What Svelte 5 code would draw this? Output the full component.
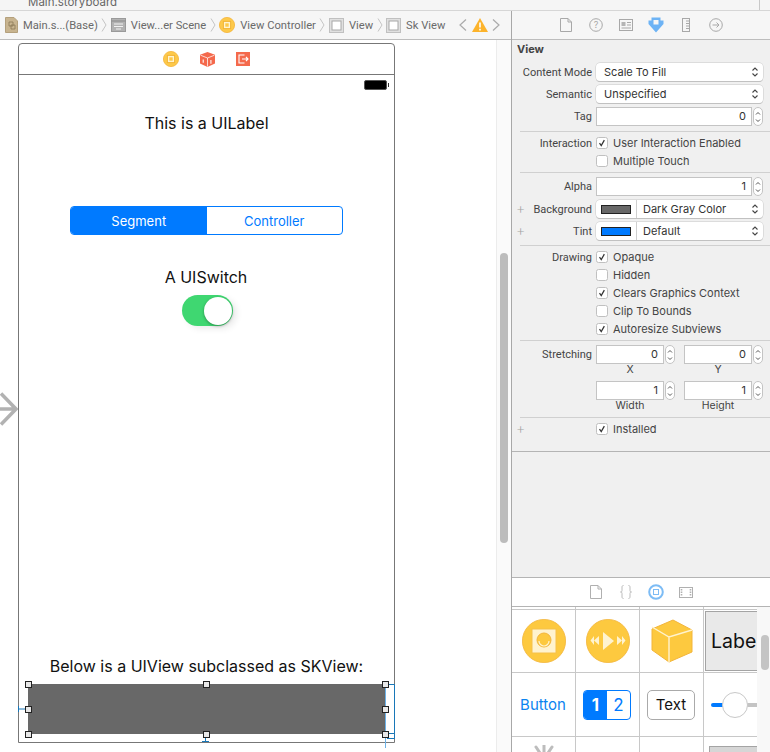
<script>
  const crumbs = [
    { name: "Main.s...(Base)", icon: "file" },
    { name: "View...er Scene", icon: "scene" },
    { name: "View Controller", icon: "vc" },
    { name: "View", icon: "view" },
    { name: "Sk View", icon: "view" },
  ];

  const interaction = [
    { label: "User Interaction Enabled", on: true },
    { label: "Multiple Touch", on: false },
  ];

  const drawing = [
    { label: "Opaque", on: true },
    { label: "Hidden", on: false },
    { label: "Clears Graphics Context", on: true },
    { label: "Clip To Bounds", on: false },
    { label: "Autoresize Subviews", on: true },
  ];

  // handles around the selected view, in percent of its box
  const handles = [
    [0, 0], [50, 0], [100, 0],
    [0, 50], [100, 50],
    [0, 100], [50, 100], [100, 100],
  ];
</script>

{#snippet updown()}
  <svg class="updown" viewBox="0 0 8 12" width="8" height="12">
    <path d="M1.5 4.5 L4 2 L6.5 4.5 M1.5 7.5 L4 10 L6.5 7.5" fill="none" stroke="#444" stroke-width="1.1" />
  </svg>
{/snippet}

{#snippet stepper()}
  <span class="stepper">
    <svg viewBox="0 0 8 16" width="8" height="16">
      <path d="M2 5.5 L4 3.5 L6 5.5 M2 10.5 L4 12.5 L6 10.5" fill="none" stroke="#555" stroke-width="1" />
    </svg>
  </span>
{/snippet}

{#snippet check(on)}
  <span class="box">
    {#if on}
      <svg viewBox="0 0 12 12" width="12" height="12">
        <path d="M3 6.2 L5.1 9 L8.8 2.6" fill="none" stroke="#333" stroke-width="1.5" />
      </svg>
    {/if}
  </span>
{/snippet}

{#snippet vcIcon(size)}
  <svg viewBox="0 0 16 16" width={size} height={size}>
    <circle cx="8" cy="8" r="7.6" fill="#fdc94a" stroke="#f5b437" stroke-width="0.8" />
    <rect x="4.4" y="4.4" width="7.2" height="7.2" fill="#fff3cf" stroke="#f2b437" />
    <rect x="6.3" y="6.3" width="3.4" height="3.4" fill="#fdc94a" />
  </svg>
{/snippet}

<div class="app">
  <div class="tabstrip">
    <span class="tabname">Main.storyboard</span>
    <span class="tabtick"></span>
  </div>

  <div class="main">
    <div class="editor">
      <nav class="crumbs">
        {#each crumbs as c, i}
          {#if i > 0}
            <svg class="sep" viewBox="0 0 6 14" width="6" height="14">
              <path d="M1 0.5 L5 7 L1 13.5" fill="none" stroke="#c4c4c4" />
            </svg>
          {/if}
          <span class="crumb">
            {#if c.icon === "file"}
              <svg viewBox="0 0 13 16" width="13" height="16">
                <path d="M0.5 0.5 H9 L12.5 4 V15.5 H0.5 Z" fill="#c8b48f" stroke="#b4a07c" />
                <path d="M4 5 H8 V9 H4 Z M6 8 H10 V12 H6 Z" fill="none" stroke="#8c7a55" stroke-width="0.8" />
              </svg>
            {:else if c.icon === "scene"}
              <svg viewBox="0 0 15 14" width="15" height="14">
                <rect x="0.5" y="0.5" width="14" height="13" fill="#b2b2b2" stroke="#9a9a9a" />
                <path d="M0.5 3 H14.5" stroke="#8a8a8a" />
                <path d="M3 6 H12 M3 8.5 H12 M5 11 H10" stroke="#f2f2f2" />
              </svg>
            {:else if c.icon === "vc"}
              {@render vcIcon(16)}
            {:else}
              <svg viewBox="0 0 15 15" width="15" height="15">
                <rect x="0.5" y="0.5" width="14" height="14" fill="#e0e0e0" stroke="#c0c0c0" />
                <rect x="3" y="3" width="9" height="9" fill="#fff" stroke="#a8a8a8" />
              </svg>
            {/if}
            {c.name}
          </span>
        {/each}
        <span class="crumbnav">
          <svg viewBox="0 0 8 12" width="8" height="12"><path d="M7 0.5 L1 6 L7 11.5" fill="none" stroke="#aaa" stroke-width="1.2" /></svg>
          <svg viewBox="0 0 16 14" width="16" height="14">
            <path d="M8 0 L16 14 H0 Z" fill="#fcb32b" />
            <path d="M8 4.5 V9.5 M8 10.8 V12.4" stroke="#fff" stroke-width="1.6" />
          </svg>
          <svg viewBox="0 0 8 12" width="8" height="12"><path d="M1 0.5 L7 6 L1 11.5" fill="none" stroke="#aaa" stroke-width="1.2" /></svg>
        </span>
      </nav>

      <div class="canvas">
        <svg class="entry" viewBox="0 0 18 34" width="18" height="34">
          <path d="M-2 17 H15 M1 1.5 L16 17 L1 32.5" fill="none" stroke="#b2b2b2" stroke-width="3.5" />
        </svg>

        <section class="device">
          <header class="devicebar">
            {@render vcIcon(16)}
            <svg viewBox="0 0 14 14" width="15" height="15">
              <path d="M7 0 L14 2.6 V10.8 L7 14 L0 10.8 V2.6 Z" fill="#f4694c" />
              <path d="M0.5 3 L7 5.6 L13.5 3 M7 5.6 V13.6" fill="none" stroke="#fff" stroke-width="0.7" />
              <path d="M3 7 V10 M10.2 7.4 V11" stroke="#fff" stroke-width="1" />
            </svg>
            <svg viewBox="0 0 14 14" width="14" height="14">
              <rect width="14" height="14" fill="#f4694c" />
              <path d="M8.5 3 H3 V11 H8.5 M6 7 H12 M10 5 L12 7 L10 9" fill="none" stroke="#fff" stroke-width="1.1" />
            </svg>
          </header>

          <div class="screen">
            <div class="status">
              <span class="battery"></span>
            </div>
            <div class="uilabel first">This is a UILabel</div>
            <div class="segment">
              <span class="seg on">Segment</span>
              <span class="seg">Controller</span>
            </div>
            <div class="uilabel second">A UISwitch</div>
            <div class="switch"><span class="knob"></span></div>
            <div class="uilabel third">Below is a UIView subclassed as SKView:</div>
            <div class="skview">
              {#each handles as [hx, hy]}
                <span class="handle" style="left: {hx}%; top: {hy}%"></span>
              {/each}
              <svg class="guides" viewBox="0 0 420 70" width="420" height="70">
                <path d="M-9.5 22 V28 M-9.5 25 H-2" stroke="#1877b8" fill="none" />
                <path d="M177.5 50 V58 M174 57.5 H181" stroke="#1877b8" fill="none" />
                <path d="M357.5 -2 V64" stroke="#6cb2e8" fill="none" />
                <path d="M359 0.5 H366.5 V49.5 M359 49.5 H366.5 M359 54.5 H366.5 V50" stroke="#1877b8" fill="none" />
              </svg>
            </div>
          </div>
        </section>

        <div class="vscroll"><span class="vthumb"></span></div>
      </div>
    </div>

    <aside class="inspector">
      <div class="tabs">
        <svg viewBox="0 0 12 14" width="12" height="14"><path d="M0.5 0.5 H8 L11.5 4 V13.5 H0.5 Z M8 0.5 V4 H11.5" fill="none" stroke="#a8a8a8" /></svg>
        <svg viewBox="0 0 14 14" width="14" height="14">
          <circle cx="7" cy="7" r="6.3" fill="none" stroke="#a8a8a8" />
          <text x="7" y="10" class="helpmark">?</text>
        </svg>
        <svg viewBox="0 0 14 12" width="14" height="12">
          <rect x="0.5" y="0.5" width="13" height="11" fill="none" stroke="#a8a8a8" />
          <rect x="2.5" y="3" width="4" height="4" fill="#b4b4b4" />
          <path d="M8 3.5 H12 M8 6 H12 M2.5 9 H12" stroke="#a8a8a8" />
        </svg>
        <svg viewBox="0 0 16 16" width="16" height="16">
          <path d="M3.5 0.5 H12.5 V3.5 H15.5 V7 L8 15.5 L0.5 7 V3.5 H3.5 Z" fill="#6db3f5" />
          <rect x="5.5" y="3" width="5" height="4.5" fill="#f6f6f6" />
        </svg>
        <svg viewBox="0 0 8 14" width="8" height="14">
          <rect x="0.5" y="0.5" width="7" height="13" fill="none" stroke="#a8a8a8" />
          <path d="M4 3 H7 M4 5.5 H7 M4 8 H7 M4 10.5 H7" stroke="#a8a8a8" />
        </svg>
        <svg viewBox="0 0 14 14" width="14" height="14">
          <circle cx="7" cy="7" r="6.3" fill="none" stroke="#a8a8a8" />
          <path d="M3.5 7 H10 M7.5 4.5 L10 7 L7.5 9.5" fill="none" stroke="#a8a8a8" />
        </svg>
      </div>

      <div class="attrs">
        <h3>View</h3>

        <div class="sect s1">
          <div class="row h18"><span class="lab">Content Mode</span><div class="select">Scale To Fill{@render updown()}</div></div>
          <div class="row h18"><span class="lab">Semantic</span><div class="select">Unspecified{@render updown()}</div></div>
          <div class="row h19"><span class="lab">Tag</span><div class="numline"><span class="input">0</span>{@render stepper()}</div></div>
        </div>
        <hr />

        <div class="sect s2">
          {#each interaction as item, i}
            <div class="row h18">
              <span class="lab">{i === 0 ? "Interaction" : ""}</span>
              <label class="chk">{@render check(item.on)}{item.label}</label>
            </div>
          {/each}
        </div>
        <hr />

        <div class="sect s3">
          <div class="row h19"><span class="lab">Alpha</span><div class="numline"><span class="input">1</span>{@render stepper()}</div></div>
          <div class="row h18">
            <span class="lab"><span class="plus">+</span>Background</span>
            <div class="select colored"><span class="well"><i class="gray"></i></span>Dark Gray Color{@render updown()}</div>
          </div>
          <div class="row h18">
            <span class="lab"><span class="plus">+</span>Tint</span>
            <div class="select colored"><span class="well"><i class="blue"></i></span>Default{@render updown()}</div>
          </div>
        </div>
        <hr />

        <div class="sect s4">
          {#each drawing as item, i}
            <div class="row h18">
              <span class="lab">{i === 0 ? "Drawing" : ""}</span>
              <label class="chk">{@render check(item.on)}{item.label}</label>
            </div>
          {/each}
        </div>
        <hr />

        <div class="sect s5">
          <div class="row h18">
            <span class="lab">Stretching</span>
            <div class="pairs">
              <div class="pair"><span class="input">0</span>{@render stepper()}</div>
              <div class="pair"><span class="input">0</span>{@render stepper()}</div>
            </div>
          </div>
          <div class="row h14">
            <span class="lab"></span>
            <div class="pairs caps"><span>X</span><span>Y</span></div>
          </div>
          <div class="row h18 gap4">
            <span class="lab"></span>
            <div class="pairs">
              <div class="pair"><span class="input">1</span>{@render stepper()}</div>
              <div class="pair"><span class="input">1</span>{@render stepper()}</div>
            </div>
          </div>
          <div class="row h14">
            <span class="lab"></span>
            <div class="pairs caps"><span>Width</span><span>Height</span></div>
          </div>
        </div>
        <hr />

        <div class="sect s6">
          <div class="row h18">
            <span class="lab"><span class="plus">+</span></span>
            <label class="chk">{@render check(true)}Installed</label>
          </div>
        </div>
      </div>

      <div class="filler"></div>

      <div class="libtabs">
        <svg viewBox="0 0 12 14" width="12" height="14"><path d="M0.5 0.5 H8 L11.5 4 V13.5 H0.5 Z M8 0.5 V4 H11.5" fill="none" stroke="#b0b0b0" /></svg>
        <svg viewBox="0 0 12 14" width="12" height="14">
          <path d="M3.5 0.5 C2 0.5 2 1.5 2 3 V5.5 C2 6.5 1.5 7 0.5 7 C1.5 7 2 7.5 2 8.5 V11 C2 12.5 2 13.5 3.5 13.5 M8.5 0.5 C10 0.5 10 1.5 10 3 V5.5 C10 6.5 10.5 7 11.5 7 C10.5 7 10 7.5 10 8.5 V11 C10 12.5 10 13.5 8.5 13.5" fill="none" stroke="#b4b4b4" stroke-width="0.9" />
        </svg>
        <svg viewBox="0 0 16 16" width="16" height="16">
          <circle cx="8" cy="8" r="6.8" fill="none" stroke="#7dbcf5" stroke-width="2" />
          <rect x="5.5" y="5.5" width="5" height="5" fill="none" stroke="#7dbcf5" />
        </svg>
        <svg viewBox="0 0 14 11" width="14" height="11">
          <rect x="0.5" y="0.5" width="13" height="10" fill="none" stroke="#b0b0b0" />
          <path d="M2.5 2 V9.5 M11.5 2 V9.5" stroke="#b0b0b0" stroke-dasharray="1.5 1" stroke-width="1.6" />
        </svg>
      </div>

      <div class="library">
        <div class="grid">
          <div class="cell"></div><div class="cell"></div><div class="cell"></div><div class="cell"></div>

          <div class="cell">
            <svg viewBox="0 0 44 44" width="44" height="44">
              <circle cx="22" cy="22" r="21.6" fill="#fdc93f" stroke="#f3b53a" stroke-width="0.8" />
              <rect x="10" y="10" width="24" height="24" fill="#fff3cf" stroke="#f6c14a" />
              <circle cx="22" cy="21" r="7" fill="#fdc93f" stroke="#f3b53a" />
              <path d="M17 22 a5 5 0 0 0 10 0" fill="none" stroke="#fff3cf" stroke-width="1.2" />
            </svg>
          </div>
          <div class="cell">
            <svg viewBox="0 0 44 44" width="44" height="44">
              <circle cx="22" cy="22" r="21.6" fill="#fdc93f" stroke="#f3b53a" stroke-width="0.8" />
              <path d="M17 13 L28 22 L17 31 Z" fill="#fff3cf" />
              <path d="M13 17 L8 21.5 L13 26 Z M8 17 L4.5 21.5 L8 26 Z M31 17 L36 21.5 L31 26 Z M36 17 L39.5 21.5 L36 26 Z" fill="#fff3cf" />
            </svg>
          </div>
          <div class="cell">
            <svg viewBox="0 0 42 44" width="42" height="44">
              <path d="M1 10 L22 1 L41 11 V33 L18 43 L1 31 Z" fill="#fdc93f" stroke="#f3b53a" />
              <path d="M1 8 L18 18 L41 11 M18 18 V43" fill="none" stroke="#fff3cf" stroke-width="1.4" />
            </svg>
          </div>
          <div class="cell labelcell"><span class="labelbox">Label</span></div>

          <div class="cell"><span class="btnword">Button</span></div>
          <div class="cell">
            <div class="minisegment"><span class="mini on">1</span><span class="mini">2</span></div>
          </div>
          <div class="cell"><span class="textfield">Text</span></div>
          <div class="cell slidercell">
            <div class="slider"><span class="fill"></span><span class="thumb"></span><span class="rest"></span></div>
          </div>

          <div class="cell">
            <svg class="spinner" viewBox="0 0 26 8" width="26" height="8">
              <path d="M13 0 V8 M5 2 L9 8 M21 2 L17 8" stroke="#bdbdbd" stroke-width="3" stroke-linecap="round" />
            </svg>
          </div>
          <div class="cell"></div>
          <div class="cell"></div>
          <div class="cell"><span class="imgbox"></span></div>
        </div>
        <div class="libscroll"><span class="libthumb"></span></div>
      </div>
    </aside>
  </div>
</div>

<style>
  :global(body) {
    margin: 0;
    font-family: Inter, "Liberation Sans", sans-serif;
  }

  .app {
    width: 770px;
    height: 752px;
    overflow: hidden;
    display: flex;
    flex-direction: column;
    background: #fff;
  }

  .tabstrip {
    height: 10px;
    flex: none;
    overflow: hidden;
    background: #f5f5f5;
    border-bottom: 1px solid #d6d6d6;
    display: flex;
    padding-left: 28px;
    font-size: 11.5px;
    line-height: 5px;
    color: #666;
  }

  .tabtick {
    width: 1px;
    background: #c8c8c8;
    margin-left: auto;
    margin-right: 10px;
  }

  .main {
    flex: 1;
    display: flex;
    min-height: 0;
  }

  .editor {
    width: 511px;
    flex: none;
    display: flex;
    flex-direction: column;
  }

  .crumbs {
    height: 28px;
    flex: none;
    display: flex;
    align-items: center;
    gap: 3.5px;
    padding-left: 5px;
    background: #f6f6f6;
    border-bottom: 1px solid #bdbdbd;
    font-family: Roboto, "Liberation Sans", sans-serif;
    font-size: 11.2px;
    color: #6a6a6a;
    white-space: nowrap;
  }

  .crumb {
    display: flex;
    align-items: center;
    gap: 5px;
  }

  .crumbnav {
    display: flex;
    align-items: center;
    gap: 4.5px;
    margin-left: 10.5px;
  }

  .canvas {
    flex: 1;
    position: relative;
    background: #fff;
    overflow: hidden;
  }

  .entry {
    position: absolute;
    left: 0;
    top: 352px;
  }

  .device {
    position: absolute;
    left: 18px;
    top: 3px;
    width: 375px;
    height: 698px;
    border: 1px solid #777;
    border-radius: 4px 4px 0 0;
    display: flex;
    flex-direction: column;
  }

  .devicebar {
    height: 30px;
    flex: none;
    border-bottom: 1px solid #777;
    display: flex;
    align-items: center;
    justify-content: center;
    gap: 21px;
  }

  .screen {
    flex: 1;
    display: flex;
    flex-direction: column;
    align-items: center;
    color: #111;
  }

  .status {
    align-self: stretch;
    height: 16px;
    display: flex;
    align-items: flex-end;
    justify-content: flex-end;
    padding-right: 7px;
  }

  .battery {
    width: 21px;
    height: 8px;
    background: #000;
    border: 1px solid #555;
    border-radius: 2px;
    position: relative;
    box-sizing: content-box;
    margin-bottom: 1px;
  }

  .battery::after {
    content: "";
    position: absolute;
    right: -3px;
    top: 2px;
    width: 1px;
    height: 4px;
    background: #333;
  }

  .uilabel {
    font-size: 16px;
    line-height: 20px;
    white-space: nowrap;
  }

  .first { margin-top: 22px; }
  .second { margin-top: 32px; margin-right: 1px; }
  .third { margin-top: auto; }

  .segment {
    margin-top: 73px;
    width: 273px;
    height: 29px;
    box-sizing: border-box;
    display: flex;
    border: 1px solid #007aff;
    border-radius: 4px;
    overflow: hidden;
    font-size: 13px;
    color: #007aff;
  }

  .seg {
    flex: 1;
    display: flex;
    align-items: center;
    justify-content: center;
  }

  .seg.on {
    background: #007aff;
    color: #fff;
  }

  .switch {
    margin-top: 8px;
    margin-left: 2px;
    width: 51px;
    height: 31px;
    background: #3fd771;
    border-radius: 16px;
    display: flex;
    justify-content: flex-end;
    padding: 1.5px;
    box-sizing: border-box;
    box-shadow: 4px 3px 6px rgba(0, 0, 0, 0.08);
  }

  .knob {
    width: 28px;
    height: 28px;
    border-radius: 50%;
    background: #fff;
    box-shadow: 0 1px 3px rgba(0, 0, 0, 0.35);
  }

  .skview {
    position: relative;
    margin-top: 8px;
    margin-bottom: 8px;
    width: 357px;
    height: 50px;
    background: #686868;
  }

  .handle {
    position: absolute;
    width: 7px;
    height: 7px;
    margin: -3.5px 0 0 -3.5px;
    background: #e8e8e8;
    border: 1px solid #222;
    box-sizing: border-box;
    z-index: 1;
  }

  .guides {
    position: absolute;
    left: 0;
    top: 0;
    overflow: visible;
    pointer-events: none;
  }

  .vscroll {
    position: absolute;
    right: 0;
    top: 0;
    bottom: 0;
    width: 14px;
    background: #fafafa;
    border-left: 1px solid #ececec;
  }

  .vthumb {
    position: absolute;
    left: 3px;
    top: 213px;
    width: 8px;
    height: 290px;
    border-radius: 4px;
    background: #bcbcbc;
  }

  .inspector {
    flex: 1;
    display: flex;
    flex-direction: column;
    border-left: 1px solid #a8a8a8;
    background: #f0f0f0;
    font-size: 11px;
    color: #444;
    min-width: 0;
  }

  .tabs {
    height: 28px;
    flex: none;
    display: grid;
    grid-template-columns: repeat(6, 30px);
    justify-content: center;
    justify-items: center;
    align-items: center;
    background: #f6f6f6;
    border-bottom: 1px solid #bdbdbd;
  }

  .helpmark {
    font-size: 9px;
    fill: #a8a8a8;
    text-anchor: middle;
  }

  .attrs h3 {
    margin: 0;
    height: 18px;
    line-height: 18px;
    padding-left: 5px;
    font-size: 11px;
    font-weight: 700;
    color: #444;
  }

  .attrs hr {
    margin: 0 0 0 8px;
    border: 0;
    height: 1px;
    background: #d0d0d0;
  }

  .sect {
    display: flex;
    flex-direction: column;
  }

  .s1 { padding: 5px 0 5px; gap: 4px; }
  .s2 { padding: 2px 0 2px; }
  .s3 { padding: 4px 0 5px; gap: 4px; }
  .s4 { padding: 2px 0 2px; }
  .s5 { padding: 4px 0 4px; }
  .s6 { padding: 2px 0 13px; }

  .row {
    display: grid;
    grid-template-columns: 80px 1fr;
    column-gap: 4px;
    align-items: center;
    padding-right: 7px;
    white-space: nowrap;
  }

  .h18 { height: 18px; }
  .h19 { height: 19px; }
  .h14 { height: 14px; }
  .gap4 { margin-top: 4px; }

  .lab {
    display: flex;
    justify-content: flex-end;
    font-family: Roboto, "Liberation Sans", sans-serif;
    color: #444;
  }

  .plus {
    margin-right: auto;
    margin-left: 5px;
    color: #a4a4a4;
    font-size: 13px;
    line-height: 13px;
    font-weight: 300;
  }

  .select {
    height: 18px;
    box-sizing: border-box;
    display: flex;
    align-items: center;
    padding-left: 8px;
    background: #fff;
    border-radius: 4px;
    box-shadow: 0 0 0 0.5px #c8c8c8, 0 1px 0 #bbb;
    color: #333;
  }

  .updown {
    margin-left: auto;
    margin-right: 4px;
  }

  .select.colored {
    padding-left: 0;
  }

  .well {
    width: 40px;
    height: 100%;
    display: flex;
    align-items: center;
    justify-content: center;
    border-right: 1px solid #cfcfcf;
    margin-right: 6px;
    flex: none;
  }

  .well i {
    width: 28px;
    height: 7px;
    border: 1px solid #222;
  }

  .well .gray { background: #686868; }
  .well .blue { background: #007aff; }

  .numline,
  .pair {
    display: flex;
    gap: 1px;
    height: 100%;
  }

  .input {
    flex: 1;
    box-sizing: border-box;
    height: 100%;
    background: #fff;
    border: 1px solid #c4c4c4;
    text-align: right;
    padding-right: 5px;
    line-height: 17px;
    color: #333;
  }

  .stepper {
    width: 10px;
    height: 100%;
    box-sizing: border-box;
    display: flex;
    align-items: center;
    justify-content: center;
    background: #fff;
    border: 1px solid #c4c4c4;
    border-radius: 5px;
  }

  .chk {
    display: flex;
    align-items: center;
    gap: 5px;
    color: #444;
  }

  .box {
    width: 12px;
    height: 12px;
    box-sizing: border-box;
    background: #fff;
    border: 1px solid #c0c0c0;
    border-radius: 2.5px;
    display: flex;
    align-items: center;
    justify-content: center;
  }

  .pairs {
    display: grid;
    grid-template-columns: 79px 79px;
    column-gap: 9px;
    height: 100%;
  }

  .caps span {
    width: 68px;
    text-align: center;
    font-size: 10.5px;
    line-height: 14px;
  }

  .filler {
    flex: none;
    height: 125px;
    border-top: 1px solid #b4b4b4;
  }

  .libtabs {
    height: 28px;
    flex: none;
    display: grid;
    grid-template-columns: repeat(4, 30px);
    justify-content: center;
    justify-items: center;
    align-items: center;
    background: #fff;
    border-top: 1px solid #b4b4b4;
    border-bottom: 1px solid #b4b4b4;
  }

  .library {
    flex: 1;
    display: flex;
    background: #fff;
    min-height: 0;
    overflow: hidden;
  }

  .grid {
    width: 245px;
    flex: none;
    overflow: hidden;
    display: grid;
    grid-template-columns: repeat(4, 64px);
    grid-template-rows: 3px 63px 64px 64px;
  }

  .cell {
    box-sizing: border-box;
    border-right: 1px solid #c8c8c8;
    border-bottom: 1px solid #c8c8c8;
    display: flex;
    align-items: center;
    justify-content: center;
    overflow: hidden;
    color: #111;
  }

  .labelcell {
    padding: 1px 0 1px 1px;
    justify-content: flex-start;
    align-items: stretch;
    border-right: 0;
  }

  .labelbox {
    flex: 1;
    display: flex;
    align-items: center;
    background: #e9e9e9;
    border: 1px solid #a4a4a4;
    font-size: 19.5px;
    padding-left: 5px;
    overflow: hidden;
  }

  .btnword {
    font-size: 15px;
    color: #0a84f0;
    margin-right: 1px;
  }

  .minisegment {
    width: 48px;
    height: 30px;
    margin-right: 1px;
    box-sizing: border-box;
    display: flex;
    border: 1px solid #007aff;
    border-radius: 4px;
    overflow: hidden;
    font-size: 17px;
    color: #007aff;
  }

  .mini {
    flex: 1;
    display: flex;
    align-items: center;
    justify-content: center;
  }

  .mini.on {
    background: #007aff;
    color: #fff;
    font-weight: 700;
  }

  .textfield {
    width: 48px;
    height: 30px;
    margin-right: 1px;
    box-sizing: border-box;
    display: flex;
    align-items: center;
    justify-content: center;
    border: 1px solid #aaa;
    border-radius: 5px;
    font-size: 15px;
  }

  .slidercell {
    justify-content: flex-start;
    border-right: 0;
    padding-left: 7px;
  }

  .slider {
    position: relative;
    width: 60px;
    height: 26px;
    flex: none;
  }

  .slider .fill {
    position: absolute;
    left: 0;
    top: 11px;
    width: 14px;
    height: 4px;
    border-radius: 2px;
    background: #007aff;
  }

  .slider .rest {
    position: absolute;
    left: 36px;
    top: 11px;
    width: 20px;
    height: 4px;
    background: #c4c4c4;
  }

  .slider .thumb {
    position: absolute;
    left: 11px;
    top: 0;
    width: 26px;
    height: 26px;
    box-sizing: border-box;
    border: 1px solid #c8c8c8;
    border-radius: 50%;
    background: #fff;
    z-index: 1;
  }

  .spinner {
    align-self: flex-start;
    margin-top: 8px;
  }

  .imgbox {
    align-self: flex-start;
    margin-top: 9px;
    margin-left: 9px;
    width: 60px;
    height: 40px;
    flex: none;
    background: #d6d6d6;
    border: 1px solid #a4a4a4;
  }

  .libscroll {
    flex: 1;
    position: relative;
    background: #f8f8f8;
  }

  .libthumb {
    position: absolute;
    left: 4px;
    top: 28px;
    width: 8px;
    height: 35px;
    border-radius: 4px;
    background: #c4c4c4;
  }
</style>
